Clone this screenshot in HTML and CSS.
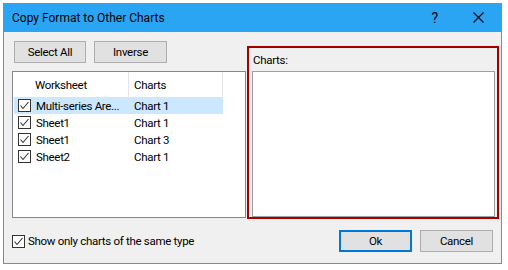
FILE: index.html
```html
<!DOCTYPE html>
<html>
<head>
<meta charset="utf-8">
<link rel="stylesheet" href="styles.css">
</head>
<body>
<div class="window">
  <div class="titlebar">
    <span class="title">Copy Format to Other Charts</span>
    <span class="help">?</span>
    <svg class="close" width="11" height="11" viewBox="0 0 11 11"><path d="M0.5 0.5 L10.5 10.5 M10.5 0.5 L0.5 10.5" stroke="#000" stroke-width="1.1" fill="none"/></svg>
  </div>
  <div class="content">
    <div class="top">
      <div class="leftcol">
        <div class="btnrow">
          <div class="btn btn-select">Select All</div>
          <div class="btn btn-inverse">Inverse</div>
        </div>
        <div class="listbox">
          <div class="row header">
            <div class="c1 hc1">Worksheet</div>
            <div class="c2 hc2">Charts</div>
          </div>
          <div class="row selected">
            <div class="c1"><span class="cb"><svg width="11" height="11" viewBox="0 0 11 11"><path d="M1.5 5.5 L4 8.5 L9.5 2" stroke="#333" stroke-width="1.1" fill="none"/></svg></span>Multi-series Are...</div>
            <div class="c2">Chart 1</div>
          </div>
          <div class="row">
            <div class="c1"><span class="cb"><svg width="11" height="11" viewBox="0 0 11 11"><path d="M1.5 5.5 L4 8.5 L9.5 2" stroke="#333" stroke-width="1.1" fill="none"/></svg></span>Sheet1</div>
            <div class="c2">Chart 1</div>
          </div>
          <div class="row">
            <div class="c1"><span class="cb"><svg width="11" height="11" viewBox="0 0 11 11"><path d="M1.5 5.5 L4 8.5 L9.5 2" stroke="#333" stroke-width="1.1" fill="none"/></svg></span>Sheet1</div>
            <div class="c2">Chart 3</div>
          </div>
          <div class="row">
            <div class="c1"><span class="cb"><svg width="11" height="11" viewBox="0 0 11 11"><path d="M1.5 5.5 L4 8.5 L9.5 2" stroke="#333" stroke-width="1.1" fill="none"/></svg></span>Sheet2</div>
            <div class="c2">Chart 1</div>
          </div>
        </div>
      </div>
      <div class="redbox">
        <div class="charts-label">Charts:</div>
        <div class="charts-list"></div>
      </div>
    </div>
    <div class="bottom">
      <div class="sameType"><span class="cb"><svg width="11" height="11" viewBox="0 0 11 11"><path d="M1.5 5.5 L4 8.5 L9.5 2" stroke="#333" stroke-width="1.1" fill="none"/></svg></span><span>Show only charts of the same type</span></div>
      <div class="btn btn-ok">Ok</div>
      <div class="btn btn-cancel">Cancel</div>
    </div>
  </div>
</div>
</body>
</html>
```
FILE: styles.css
```css
* { box-sizing: border-box; }
html, body { margin: 0; padding: 0; background: #ffffff; }
body {
  font-family: "Segoe UI", Roboto, "Noto Sans", sans-serif;
  font-size: 11.5px;
  letter-spacing: -0.3px;
  color: #000;
  padding: 3px;
}
.window {
  width: 499px;
  height: 261px;
  border: 1px solid #2aa5f4;
  background: #f0f0f0;
  display: flex;
  flex-direction: column;
}
.titlebar {
  background: #2aa5f4;
  display: flex;
  align-items: center;
  padding-left: 9px;
  margin: -1px -1px 0 -1px;
  height: 29px;
  letter-spacing: 0;
}
.title { font-size: 12px; flex: 1; }
.help { font-size: 14px; margin-right: 35px; }
.close { margin-right: 18px; }
.content {
  flex: 1;
  display: flex;
  flex-direction: column;
}
.top { display: flex; }
.leftcol {
  margin-left: 8px;
  width: 234px;
  padding-top: 9px;
}
.btnrow { display: flex; gap: 8px; margin-left: 2px; }
.btn {
  height: 22px;
  background: #e1e1e1;
  border: 1px solid #adadad;
  display: flex;
  align-items: center;
  justify-content: center;
}
.btn-select { width: 72px; }
.btn-inverse { width: 73px; }
.listbox {
  margin-top: 8px;
  height: 147px;
  background: #fff;
  border: 1px solid #828790;
  padding: 0 0 0 1px;
}
.row { display: flex; height: 17px; align-items: center; width: 209px; }
.row.header { height: 25px; }
.row.selected { background: #cce8ff; }
.c1 { width: 114px; display: flex; align-items: center; padding-left: 4px; white-space: nowrap; }
.c2 { width: 95px; padding-left: 6px; }
.hc1 { padding-left: 21px; height: 100%; }
.hc2 { height: 100%; display: flex; align-items: center; border-left: 1px solid #e5e5e5; border-right: 1px solid #e5e5e5; padding-left: 5px; }
.cb {
  width: 13px; height: 13px;
  border: 1px solid #333;
  background: #fff;
  display: inline-flex;
  align-items: center;
  justify-content: center;
  margin-right: 5px;
  flex: none;
}
.redbox {
  margin-left: 1px;
  margin-top: 14px;
  width: 252px;
  height: 173px;
  border: 2px solid #a50000;
  display: flex;
  flex-direction: column;
}
.charts-label { padding-left: 4px; padding-top: 5px; height: 23px; }
.charts-list {
  margin-left: 3px;
  margin-right: 2px;
  flex: 1;
  background: #fff;
  border: 1px solid #a0a0a0;
  margin-bottom: 0;
}
.bottom {
  display: flex;
  align-items: center;
  padding-left: 8px;
  margin-top: 11px;
}
.sameType { display: flex; align-items: center; flex: 1; }
.sameType .cb { margin-right: 3px; }
.btn-ok { width: 73px; border: 2px solid #0078d7; margin-right: 8px; }
.btn-cancel { width: 73px; margin-right: 8px; }
```
